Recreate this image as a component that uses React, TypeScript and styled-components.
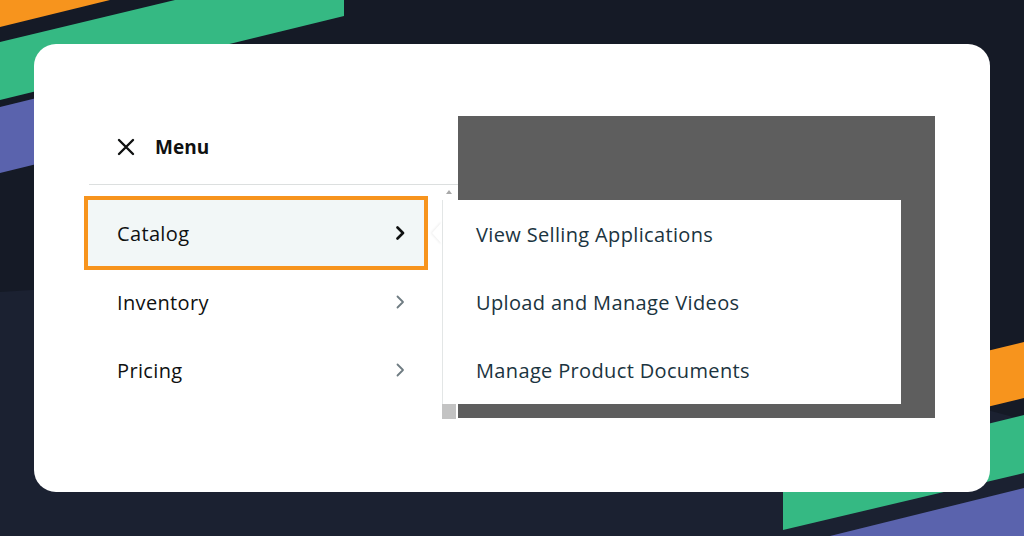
import React from 'react'
import styled, { createGlobalStyle } from 'styled-components'

const GlobalStyle = createGlobalStyle`
  * { box-sizing: border-box; }
  html, body { margin: 0; padding: 0; }
  body {
    font-family: 'Open Sans', 'Noto Sans', Arial, sans-serif;
    background: #151a26;
  }
`

const mainItems = [
  { label: 'Catalog', active: true },
  { label: 'Inventory', active: false },
  { label: 'Pricing', active: false },
]

const subItems = [
  'View Selling Applications',
  'Upload and Manage Videos',
  'Manage Product Documents',
]

function Backdrop() {
  return (
    <BackdropSvg viewBox='0 0 1024 536' preserveAspectRatio='none'>
      <path d='M0 292 C 300 270, 700 330, 1024 420 L1024 536 L0 536 Z' fill='#1b2131' />
      <polygon points='0,0 110,0 0,27' fill='#f7941d' />
      <polygon points='0,42 175,0 344,0 344,16 0,100' fill='#35b983' />
      <polygon points='0,107 200,58 200,124 0,173' fill='#5a63ad' />
      <polygon points='900,372 1024,342 1024,398 900,428' fill='#f7941d' />
      <polygon points='783,474 1024,415 1024,473 783,530' fill='#35b983' />
      <polygon points='830,536 1024,488 1024,536' fill='#5a63ad' />
    </BackdropSvg>
  )
}

function CloseIcon() {
  return (
    <svg width='18' height='18' viewBox='0 0 18 18'>
      <path d='M2 2L16 16M16 2L2 16' stroke='#0f1111' strokeWidth='2.4' strokeLinecap='round' />
    </svg>
  )
}

function Chevron({ active }: { active: boolean }) {
  return (
    <svg width='10' height='14' viewBox='0 0 10 14'>
      <path
        d='M2.5 1.5L8 7l-5.5 5.5'
        fill='none'
        stroke={active ? '#0f1111' : '#6f7c82'}
        strokeWidth={active ? 2.6 : 1.8}
        strokeLinecap='round'
        strokeLinejoin='round'
      />
    </svg>
  )
}

function App() {
  return (
    <Page>
      <GlobalStyle />
      <Backdrop />
      <Card>
        <Frame>
          <Nav>
            <NavHeader>
              <CloseIcon />
              <NavTitle>Menu</NavTitle>
            </NavHeader>
            <NavBody>
              <NavList>
                {mainItems.map((item) => (
                  <NavRow key={item.label} $active={item.active}>
                    <span>{item.label}</span>
                    <Chevron active={item.active} />
                  </NavRow>
                ))}
              </NavList>
              <Scrollbar>
                <ScrollArrow />
                <ScrollThumb />
              </Scrollbar>
            </NavBody>
          </Nav>
          <Dimmer />
          <Flyout>
            <Caret />
            {subItems.map((label) => (
              <FlyoutItem key={label}>{label}</FlyoutItem>
            ))}
          </Flyout>
        </Frame>
      </Card>
    </Page>
  )
}

export default App

const Page = styled.div`
  position: relative;
  display: flex;
  width: 100vw;
  height: 100vh;
  padding: 44px 34px;
  overflow: hidden;
`

const BackdropSvg = styled.svg`
  position: absolute;
  inset: 0;
  width: 100%;
  height: 100%;
  z-index: 0;
`

const Card = styled.div`
  position: relative;
  z-index: 1;
  flex: 1;
  background: #ffffff;
  border-radius: 22px;
  padding: 72px 55px 0;
`

const Frame = styled.div`
  position: relative;
  display: flex;
  align-items: flex-start;
`

const Nav = styled.div`
  display: flex;
  flex-direction: column;
  width: 369px;
`

const NavHeader = styled.div`
  display: flex;
  align-items: center;
  gap: 20px;
  height: 69px;
  padding: 0 0 6px 28px;
  border-bottom: 1px solid #dcdfdf;
`

const NavTitle = styled.span`
  font-size: 19px;
  font-weight: 700;
  color: #0f1111;
`

const NavBody = styled.div`
  display: flex;
  height: 234px;
`

const NavList = styled.div`
  flex: 1;
  display: flex;
  flex-direction: column;
  padding-top: 15px;
  margin-left: -1px;
`

const NavRow = styled.div<{ $active: boolean }>`
  display: flex;
  align-items: center;
  justify-content: space-between;
  width: 336px;
  height: 68px;
  padding: 0 19px 0 29px;
  font-size: 20px;
  letter-spacing: 0.35px;
  color: #0f1111;
  background: ${({ $active }) => ($active ? '#f2f7f7' : 'transparent')};
  outline: ${({ $active }) => ($active ? '4px solid #f7941d' : 'none')};

  &:first-child {
    height: 66px;
    margin-bottom: 2px;
  }
`

const Scrollbar = styled.div`
  display: flex;
  flex-direction: column;
  justify-content: space-between;
  align-items: center;
  width: 14px;
  margin-right: 2px;
  padding-top: 5px;
`

const ScrollArrow = styled.div`
  width: 0;
  height: 0;
  border-left: 3px solid transparent;
  border-right: 3px solid transparent;
  border-bottom: 4px solid #a8a8a8;
`

const ScrollThumb = styled.div`
  width: 14px;
  height: 15px;
  background: #c3c3c3;
`

const Dimmer = styled.div`
  width: 477px;
  height: 302px;
  background: #5e5e5e;
`

const Flyout = styled.div`
  position: absolute;
  left: 353px;
  top: 84px;
  width: 459px;
  height: 204px;
  background: #ffffff;
  border-left: 1px solid #e3e6e6;
  display: flex;
  flex-direction: column;
`

const Caret = styled.div`
  position: absolute;
  left: -11px;
  top: 22px;
  width: 0;
  height: 0;
  border-top: 11px solid transparent;
  border-bottom: 11px solid transparent;
  border-right: 10px solid #ffffff;
  filter: drop-shadow(-1px 0 1px rgba(0, 0, 0, 0.08));
`

const FlyoutItem = styled.div`
  display: flex;
  align-items: center;
  height: 68px;
  padding-left: 33px;
  font-size: 20px;
  letter-spacing: 0.35px;
  color: #1b3440;
`
